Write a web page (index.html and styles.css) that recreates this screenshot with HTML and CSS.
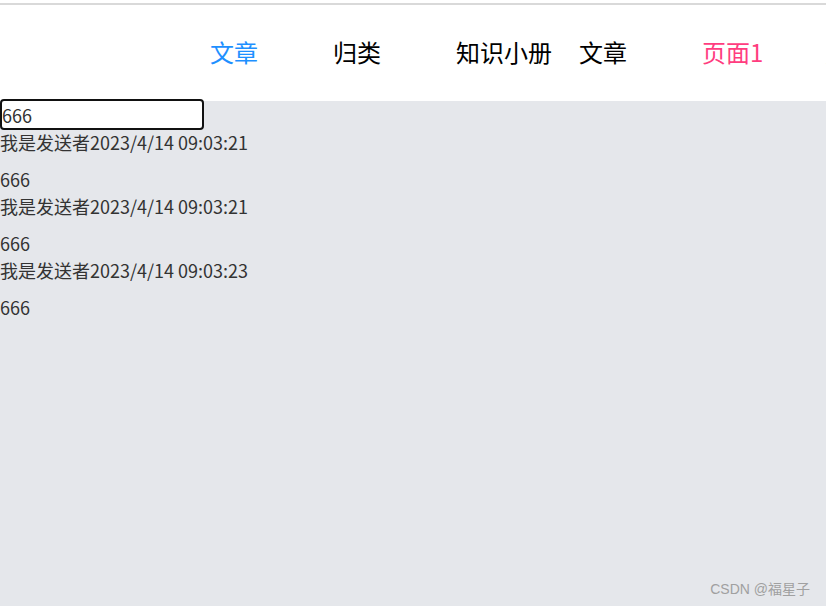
FILE: index.html
```html
<!DOCTYPE html>
<html lang="zh-CN">
<head>
<meta charset="utf-8">
<title>聊天</title>
<link rel="stylesheet" href="styles.css">
</head>
<body>
<div class="topline"></div>
<header class="nav">
  <ul class="nav-list">
    <li class="nav-item active">文章</li>
    <li class="nav-item">归类</li>
    <li class="nav-item">知识小册</li>
    <li class="nav-item">文章</li>
    <li class="nav-item pink">页面1</li>
    <li class="nav-item orange">页面2</li>
  </ul>
</header>
<main class="chat">
  <input class="msg-input" type="text" value="666">
  <div class="msg">
    <div class="sender">我是发送者2023/4/14 09:03:21</div>
    <p class="content">666</p>
  </div>
  <div class="msg">
    <div class="sender">我是发送者2023/4/14 09:03:21</div>
    <p class="content">666</p>
  </div>
  <div class="msg">
    <div class="sender">我是发送者2023/4/14 09:03:23</div>
    <p class="content">666</p>
  </div>
</main>
<div class="watermark">CSDN @福星子</div>
</body>
</html>
```

FILE: styles.css
```css
html, body {
  margin: 0;
  padding: 0;
  height: 100%;
}
body {
  font-family: "Noto Sans CJK SC", "Noto Sans", sans-serif;
  background: #e5e7eb;
  overflow: hidden;
  position: relative;
}
.topline {
  height: 3px;
  background: #fff;
  border-bottom: 2px solid #d9d9d9;
}
.nav {
  background: #fff;
  height: 96px;
  display: flex;
  align-items: center;
  overflow: hidden;
}
.nav-list {
  list-style: none;
  margin: 0;
  padding: 0 0 0 210px;
  display: flex;
  white-space: nowrap;
}
.nav-item {
  flex: 0 0 123px;
  font-size: 24px;
  line-height: 28px;
  color: #000;
  margin-top: -2px;
}
.nav-item.active { color: #1e90ff; }
.nav-item.pink { color: #ff3d7f; }
.nav-item.orange { color: #e38a1b; }
.chat {
  display: flex;
  flex-direction: column;
  align-items: flex-start;
  margin-top: -2px;
  color: #333;
  font-size: 18px;
}
.msg-input {
  width: 204px;
  height: 31px;
  box-sizing: border-box;
  margin: 0;
  padding: 0;
  border: 2px solid #111;
  border-radius: 4px;
  background: #fff;
  font-family: inherit;
  font-size: 18px;
  color: #333;
  outline: none;
}
.msg {
  margin-bottom: 6px;
}
.sender {
  line-height: 21px;
  margin-top: 2px;
}
.msg + .msg .sender { margin-top: 0; }
.content {
  margin: 16px 0 0 0;
  line-height: 21px;
}
.watermark {
  position: absolute;
  right: 16px;
  bottom: 8px;
  font-family: "Liberation Sans", "Noto Sans CJK SC", sans-serif;
  font-size: 14px;
  color: #a0a0a0;
}
```
